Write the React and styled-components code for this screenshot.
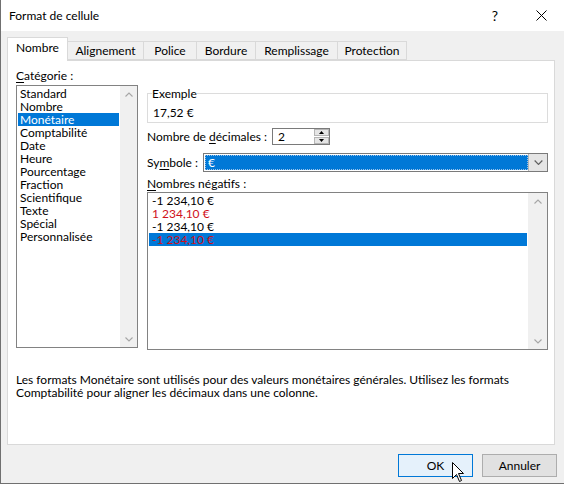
import React from 'react';
import styled, { createGlobalStyle } from 'styled-components';

// Styles
//------------------------------------------------------------------------------

const GlobalStyle = createGlobalStyle`
  html, body {
    margin: 0;
    padding: 0;
    background: #f0f0f0;
  }
  body {
    font-family: Lato, "Noto Sans", "DejaVu Sans", sans-serif;
    font-size: 12px;
    color: #000;
  }
`;

const Window = styled.div`
  position: relative;
  width: 564px;
  height: 484px;
  box-sizing: border-box;
  background: #f0f0f0;
  border-left: 1px solid #707070;
  border-bottom: 1px solid #707070;
  display: flex;
  flex-direction: column;
  overflow: hidden;
`;

const TitleBar = styled.div`
  height: 31px;
  background: #fff;
  display: flex;
  align-items: center;
  padding-left: 8px;
  flex-shrink: 0;
`;

const Title = styled.div`
  flex: 1;
  font-size: 12px;
  line-height: 16px;
`;

const TitleButton = styled.div`
  width: 46px;
  height: 31px;
  display: flex;
  align-items: center;
  justify-content: center;
  font-size: 14px;
`;

const Body = styled.div`
  flex: 1;
  padding: 6px 9px 0 6px;
  display: flex;
  flex-direction: column;
`;

const TabStrip = styled.div`
  display: flex;
  align-items: flex-end;
  height: 23px;
  position: relative;
  z-index: 1;
`;

const Tab = styled.div`
  box-sizing: border-box;
  width: ${(p) => p.$w}px;
  height: ${(p) => (p.$active ? 24 : 19)}px;
  margin-bottom: ${(p) => (p.$active ? -1 : 0)}px;
  background: ${(p) => (p.$active ? '#fff' : '#f0f0f0')};
  border: 1px solid #d9d9d9;
  border-bottom: ${(p) => (p.$active ? 'none' : '1px solid #d9d9d9')};
  margin-left: ${(p) => (p.$first ? 0 : -1)}px;
  display: flex;
  align-items: center;
  justify-content: center;
  padding-bottom: ${(p) => (p.$active ? 3 : 0)}px;
  line-height: 14px;
`;

const Panel = styled.div`
  box-sizing: border-box;
  width: 548px;
  height: 385px;
  background: #fff;
  border: 1px solid #d9d9d9;
  padding: 8px 6px 0 8px;
`;

const Columns = styled.div`
  display: grid;
  grid-template-columns: 122px 401px;
  column-gap: 9px;
  align-items: start;
`;

const Column = styled.div`
  display: flex;
  flex-direction: column;
  margin-top: ${(p) => p.$top || 0}px;
`;

const Label = styled.div`
  line-height: 13px;
  white-space: nowrap;
  margin-top: ${(p) => p.$top || 0}px;
  margin-bottom: ${(p) => p.$gap || 0}px;

  u {
    text-decoration: underline;
    text-underline-offset: 2px;
  }
`;

const ListBox = styled.div`
  box-sizing: border-box;
  height: ${(p) => p.$h}px;
  border: 1px solid #828282;
  background: #fff;
  display: flex;
`;

const ListItems = styled.div`
  flex: 1;
  padding: ${(p) => p.$pad || 0}px 1px 0 1px;
`;

const ListItem = styled.div`
  height: 13px;
  line-height: 13px;
  padding-left: ${(p) => p.$indent || 2}px;
  white-space: nowrap;
  background: ${(p) => (p.$selected ? '#0078d7' : 'transparent')};
  color: ${(p) => (p.$red ? '#d0101a' : p.$selected ? '#fff' : '#000')};
`;

const ScrollBar = styled.div`
  width: ${(p) => p.$w}px;
  background: #f0f0f0;
  display: flex;
  flex-direction: column;
  justify-content: space-between;
  align-items: center;
  padding: 6px 0 5px;
  box-sizing: border-box;
`;

const GroupBox = styled.fieldset`
  margin: 0;
  padding: 6px 5px 1px 5px;
  border: 1px solid #dcdcdc;
  height: 36px;
  box-sizing: border-box;

  legend {
    padding: 0;
    margin-left: -1px;
    line-height: 13px;
  }
`;

const SampleValue = styled.div`
  line-height: 13px;
`;

const FieldRow = styled.div`
  display: flex;
  align-items: center;
  margin-top: ${(p) => p.$top}px;
`;

const RowLabel = styled(Label)`
  width: ${(p) => p.$w}px;
  flex-shrink: 0;
`;

const SpinBox = styled.div`
  box-sizing: border-box;
  width: 58px;
  height: 17px;
  border: 1px solid #7a7a7a;
  background: #fff;
  display: flex;
  align-items: center;
  padding-left: 5px;
`;

const SpinValue = styled.div`
  flex: 1;
  line-height: 13px;
`;

const SpinButtons = styled.div`
  width: 15px;
  height: 15px;
  display: flex;
  flex-direction: column;
  gap: 1px;
`;

const SpinButton = styled.div`
  flex: 1;
  background: #e5e5e5;
  border: 1px solid #b5b5b5;
  display: flex;
  align-items: center;
  justify-content: center;
`;

const Select = styled.div`
  box-sizing: border-box;
  width: 345px;
  height: 19px;
  border: 1px solid #7a7a7a;
  background: #fff;
  display: flex;
  padding: 1px 0 1px 1px;
`;

const SelectValue = styled.div`
  flex: 1;
  background: #0078d7;
  color: #fff;
  line-height: 13px;
  padding-left: 3px;
  outline: 1px dotted #9cc3ea;
  outline-offset: -1px;
  display: flex;
  align-items: center;
`;

const SelectArrow = styled.div`
  width: 18px;
  margin: -1px 0;
  background: #e5e5e5;
  border-left: 1px solid #b5b5b5;
  display: flex;
  align-items: center;
  justify-content: center;
`;

const Description = styled.div`
  margin-top: 23px;
  line-height: 13px;
  width: 510px;
`;

const Footer = styled.div`
  display: flex;
  justify-content: flex-end;
  gap: 9px;
  padding-top: 9px;
  margin-right: -2px;
`;

const Button = styled.div`
  box-sizing: border-box;
  width: 75px;
  height: 23px;
  display: flex;
  align-items: center;
  justify-content: center;
  background: ${(p) => (p.$default ? '#e5f1fb' : '#e1e1e1')};
  border: 1px solid ${(p) => (p.$default ? '#0078d7' : '#adadad')};
`;

const Cursor = styled.svg`
  position: absolute;
  left: 451px;
  top: 462px;
`;

// Drawings
//------------------------------------------------------------------------------

const Chevron = ({ up, color = '#a6a6a6', w = 8 }) => (
  <svg width={w} height={w / 2 + 1} viewBox="0 0 8 5">
    <path d={up ? 'M0.5 4.5 L4 1 L7.5 4.5' : 'M0.5 0.5 L4 4 L7.5 0.5'} fill="none" stroke={color} strokeWidth="1.1" />
  </svg>
);

const Triangle = ({ up }) => (
  <svg width="5" height="3" viewBox="0 0 5 3">
    <path d={up ? 'M0 3 L2.5 0 L5 3 Z' : 'M0 0 L2.5 3 L5 0 Z'} fill="#000" />
  </svg>
);

const CloseIcon = () => (
  <svg width="11" height="11" viewBox="0 0 11 11">
    <path d="M0.5 0.5 L10.5 10.5 M10.5 0.5 L0.5 10.5" stroke="#000" strokeWidth="1" />
  </svg>
);

// Data
//------------------------------------------------------------------------------

const tabs = [
  { label: 'Nombre', w: 61 },
  { label: 'Alignement', w: 77 },
  { label: 'Police', w: 54 },
  { label: 'Bordure', w: 60 },
  { label: 'Remplissage', w: 83 },
  { label: 'Protection', w: 70 },
];

const categories = [
  'Standard', 'Nombre', 'Monétaire', 'Comptabilité', 'Date', 'Heure',
  'Pourcentage', 'Fraction', 'Scientifique', 'Texte', 'Spécial', 'Personnalisée',
];

const negatives = [
  { text: '-1 234,10 €' },
  { text: '1 234,10 €', red: true },
  { text: '-1 234,10 €' },
  { text: '-1 234,10 €', red: true, selected: true },
];

// Component
//------------------------------------------------------------------------------

export default function App() {
  return (
    <>
      <GlobalStyle />
      <Window>
        <TitleBar>
          <Title>Format de cellule</Title>
          <TitleButton>?</TitleButton>
          <TitleButton><CloseIcon /></TitleButton>
        </TitleBar>

        <Body>
          <TabStrip>
            {tabs.map((t, i) => (
              <Tab key={t.label} $w={t.w} $first={i === 0} $active={i === 0}>{t.label}</Tab>
            ))}
          </TabStrip>

          <Panel>
            <Columns>
              <Column>
                <Label $gap={3}><u>C</u>atégorie :</Label>
                <ListBox $h={263}>
                  <ListItems $pad={1}>
                    {categories.map((c) => (
                      <ListItem key={c} $selected={c === 'Monétaire'}>{c}</ListItem>
                    ))}
                  </ListItems>
                  <ScrollBar $w={17}>
                    <Chevron up />
                    <Chevron />
                  </ScrollBar>
                </ListBox>
              </Column>

              <Column $top={18}>
                <GroupBox>
                  <legend>Exemple</legend>
                  <SampleValue>17,52 €</SampleValue>
                </GroupBox>

                <FieldRow $top={5}>
                  <RowLabel $w={125}>Nombre de <u>d</u>écimales :</RowLabel>
                  <SpinBox>
                    <SpinValue>2</SpinValue>
                    <SpinButtons>
                      <SpinButton><Triangle up /></SpinButton>
                      <SpinButton><Triangle /></SpinButton>
                    </SpinButtons>
                  </SpinBox>
                </FieldRow>

                <FieldRow $top={8}>
                  <RowLabel $w={56}>Sy<u>m</u>bole :</RowLabel>
                  <Select>
                    <SelectValue>€</SelectValue>
                    <SelectArrow><Chevron color="#606060" w={9} /></SelectArrow>
                  </Select>
                </FieldRow>

                <Label $top={5} $gap={2}><u>N</u>ombres négatifs :</Label>
                <ListBox $h={158}>
                  <ListItems $pad={1}>
                    {negatives.map((n, i) => (
                      <ListItem key={i} $indent={3} $red={n.red} $selected={n.selected}>{n.text}</ListItem>
                    ))}
                  </ListItems>
                  <ScrollBar $w={19}>
                    <Chevron up />
                    <Chevron />
                  </ScrollBar>
                </ListBox>
              </Column>
            </Columns>

            <Description>
              Les formats Monétaire sont utilisés pour des valeurs monétaires générales. Utilisez les formats
              Comptabilité pour aligner les décimaux dans une colonne.
            </Description>
          </Panel>

          <Footer>
            <Button $default>OK</Button>
            <Button>Annuler</Button>
          </Footer>
        </Body>

        <Cursor width="13" height="21" viewBox="0 0 13 21">
          <path d="M0.5 0.5 L0.5 16.5 L4.5 12.5 L7.5 19.5 L9.5 18.5 L6.5 11.5 L11.5 11.5 Z" fill="#fff" stroke="#000" strokeWidth="1" />
        </Cursor>
      </Window>
    </>
  );
}
